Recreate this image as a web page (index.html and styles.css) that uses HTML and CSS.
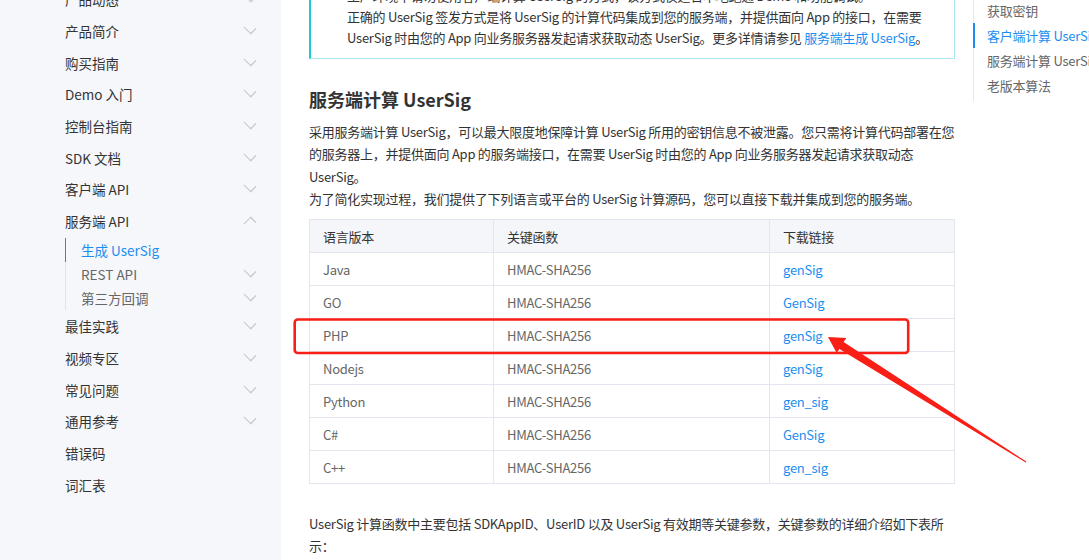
FILE: index.html
```html
<!DOCTYPE html>
<html>
<head>
  <title>生成 UserSig</title>
  <link rel="stylesheet" href="styles.css">
</head>
<body>
  <div class="layout">
    <aside class="sidebar">
      <ul class="nav">
        <li class="nav-item"><span>产品动态</span><i class="chev"></i></li>
        <li class="nav-item"><span>产品简介</span><i class="chev"></i></li>
        <li class="nav-item"><span>购买指南</span><i class="chev"></i></li>
        <li class="nav-item"><span>Demo 入门</span><i class="chev"></i></li>
        <li class="nav-item"><span>控制台指南</span><i class="chev"></i></li>
        <li class="nav-item"><span>SDK 文档</span><i class="chev"></i></li>
        <li class="nav-item"><span>客户端 API</span><i class="chev"></i></li>
        <li class="nav-item"><span>服务端 API</span><i class="chev up"></i></li>
        <li class="sub-nav">
          <div class="sub-item active"><span>生成 UserSig</span></div>
          <div class="sub-item"><span>REST API</span><i class="chev"></i></div>
          <div class="sub-item"><span>第三方回调</span><i class="chev"></i></div>
        </li>
        <li class="nav-item"><span>最佳实践</span><i class="chev"></i></li>
        <li class="nav-item"><span>视频专区</span><i class="chev"></i></li>
        <li class="nav-item"><span>常见问题</span><i class="chev"></i></li>
        <li class="nav-item"><span>通用参考</span><i class="chev"></i></li>
        <li class="nav-item"><span>错误码</span></li>
        <li class="nav-item"><span>词汇表</span></li>
      </ul>
    </aside>

    <main class="content">
      <div class="callout">
        <p>生产环境中请勿使用客户端计算 UserSig 的方式，该方式仅适合本地跑通 Demo 和功能调试。</p>
        <p>正确的 UserSig 签发方式是将 UserSig 的计算代码集成到您的服务端，并提供面向 App 的接口，在需要 UserSig 时由您的 App 向业务服务器发起请求获取动态 UserSig。更多详情请参见 <a href="#">服务端生成 UserSig</a>。</p>
      </div>

      <h2>服务端计算 UserSig</h2>
      <p class="text">采用服务端计算 UserSig，可以最大限度地保障计算 UserSig 所用的密钥信息不被泄露。您只需将计算代码部署在您的服务器上，并提供面向 App 的服务端接口，在需要 UserSig 时由您的 App 向业务服务器发起请求获取动态 UserSig。</p>
      <p class="text">为了简化实现过程，我们提供了下列语言或平台的 UserSig 计算源码，您可以直接下载并集成到您的服务端。</p>

      <table class="sig-table">
        <thead>
          <tr><th class="col-lang">语言版本</th><th class="col-func">关键函数</th><th>下载链接</th></tr>
        </thead>
        <tbody>
          <tr><td>Java</td><td>HMAC-SHA256</td><td><a href="#">genSig</a></td></tr>
          <tr><td>GO</td><td>HMAC-SHA256</td><td><a href="#">GenSig</a></td></tr>
          <tr><td>PHP</td><td>HMAC-SHA256</td><td><a href="#">genSig</a></td></tr>
          <tr><td>Nodejs</td><td>HMAC-SHA256</td><td><a href="#">genSig</a></td></tr>
          <tr><td>Python</td><td>HMAC-SHA256</td><td><a href="#">gen_sig</a></td></tr>
          <tr><td>C#</td><td>HMAC-SHA256</td><td><a href="#">GenSig</a></td></tr>
          <tr><td>C++</td><td>HMAC-SHA256</td><td><a href="#">gen_sig</a></td></tr>
        </tbody>
      </table>

      <p class="text after-table">UserSig 计算函数中主要包括 SDKAppID、UserID 以及 UserSig 有效期等关键参数，关键参数的详细介绍如下表所示：</p>
    </main>

    <nav class="toc">
      <a href="#">获取密钥</a>
      <a href="#" class="active">客户端计算 UserSig</a>
      <a href="#">服务端计算 UserSig</a>
      <a href="#">老版本算法</a>
    </nav>
  </div>

  <svg class="annotation" width="1089" height="560" viewBox="0 0 1089 560">
    <rect x="294.7" y="319.5" width="613.5" height="33.5" rx="3" fill="none" stroke="#f91e16" stroke-width="2.6"/>
    <polygon points="828,337 846.3,337.9 843.6,342.1 1026.3,461.6 1025.7,462.4 839.4,348.9 836.7,353.1" fill="#f91e16"/>
  </svg>
</body>
</html>
```

FILE: styles.css
```css
:root {
  --text-color: #333;
  --muted-color: #666;
  --link-color: #1a8ef0;
  --sidebar-bg: #f6f7fb;
  --border-color: #e3e6ee;
  --callout-color: #20c6dc;
  --callout-border: #a9e6ee;
}

html, body {
  margin: 0;
  height: 100%;
  overflow: hidden;
}

body {
  font-family: "Noto Sans CJK SC", "Liberation Sans", sans-serif;
  font-size: 13px;
  letter-spacing: -0.25px;
  color: var(--text-color);
  background-color: #fff;
}

a {
  color: var(--link-color);
  text-decoration: none;
}

.layout {
  display: flex;
  height: 100%;
}

/* sidebar */

.sidebar {
  flex: 0 0 281px;
  background-color: var(--sidebar-bg);
  overflow: hidden;
  letter-spacing: 0;
}

.nav {
  list-style: none;
  margin: -16.5px 0 0;
  padding: 0 24px 0 65px;
}

.nav-item {
  display: flex;
  align-items: center;
  justify-content: space-between;
  height: 31.7px;
  font-size: 13.5px;
  color: var(--text-color);
}

.chev {
  width: 7px;
  height: 7px;
  margin-right: 3px;
  border-right: 1px solid #c3c6cc;
  border-bottom: 1px solid #c3c6cc;
  transform: translateY(-3px) rotate(45deg) scaleX(1.3);
}

.chev.up {
  transform: translateY(2px) rotate(-135deg) scaleY(1.3);
}

.sub-nav {
  padding: 1px 0;
  margin-top: -0.5px;
}

.sub-item {
  display: flex;
  align-items: center;
  justify-content: space-between;
  height: 24px;
  padding-left: 15px;
  border-left: 1px solid #e1e3e8;
  font-size: 13.5px;
  color: var(--muted-color);
}

.sub-item.active {
  color: var(--link-color);
  border-left-color: var(--link-color);
}

/* content */

.content {
  flex: 0 0 646px;
  margin: -26px 0 0 28px;
}

.callout {
  padding: 10px 20px 10px 36px;
  border: 1px solid var(--callout-border);
  border-left: 2px solid var(--callout-color);
  line-height: 21px;
}

.callout p {
  margin: 0;
}

h2 {
  margin: 27px 0 9px;
  font-size: 18px;
  font-weight: 700;
  line-height: 26px;
  letter-spacing: 0;
}

.text {
  margin: 0;
  line-height: 22.3px;
}

.sig-table {
  width: 646px;
  margin-top: 9px;
  border-collapse: collapse;
  table-layout: fixed;
}

.sig-table th,
.sig-table td {
  height: 33px;
  padding: 0 13px;
  border: 1px solid var(--border-color);
  text-align: left;
  font-weight: 400;
  box-sizing: border-box;
}

.sig-table th {
  background-color: #f5f6fa;
  color: var(--text-color);
}

.sig-table td {
  color: var(--muted-color);
}

.col-lang {
  width: 184px;
}

.col-func {
  width: 276px;
}

.after-table {
  margin-top: 29px;
}

/* toc */

.toc {
  display: flex;
  flex-direction: column;
  align-self: flex-start;
  margin: -2.5px 0 0 18px;
  padding: 0 0 3px;
  border-left: 1px solid #e6e8ed;
  white-space: nowrap;
}

.toc a {
  display: block;
  padding-left: 12px;
  line-height: 25px;
  color: var(--muted-color);
  border-left: 2px solid transparent;
  margin-left: -1px;
}

.toc a.active {
  color: var(--link-color);
  border-left-color: var(--link-color);
}

/* screenshot markup */

.annotation {
  position: fixed;
  top: 0;
  left: 0;
  pointer-events: none;
}
```
